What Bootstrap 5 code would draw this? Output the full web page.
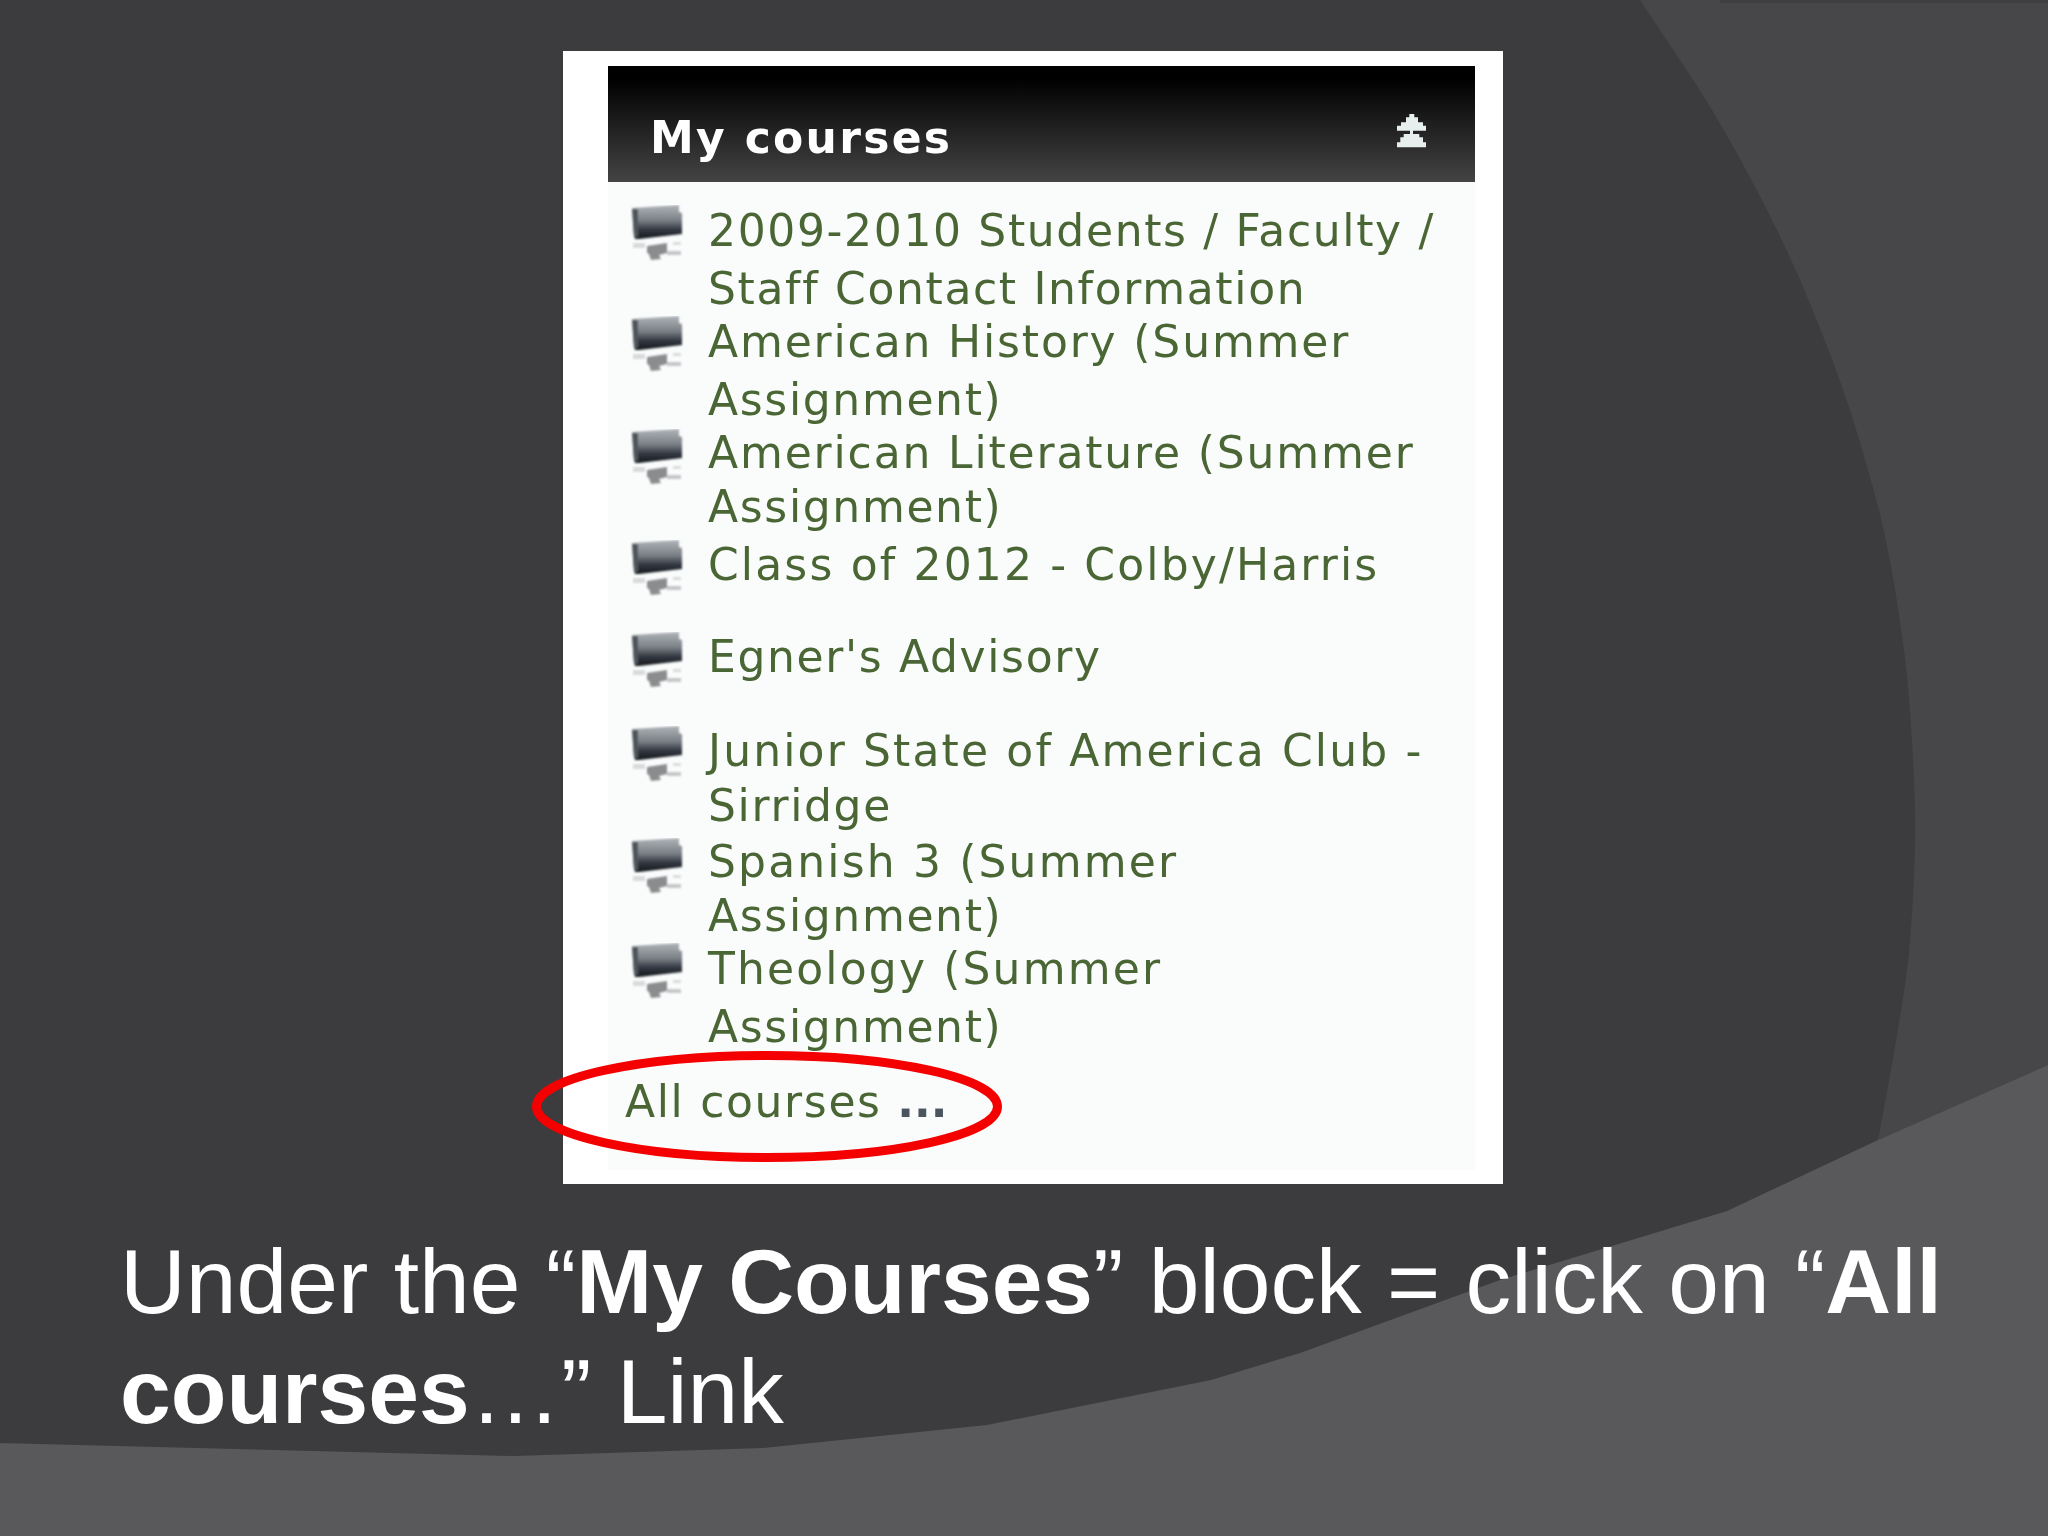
<!DOCTYPE html>
<html lang="en">
<head>
<meta charset="utf-8">
<title>My Courses</title>
<link href="https://cdn.jsdelivr.net/npm/bootstrap@5.3.0/dist/css/bootstrap.min.css" rel="stylesheet">
<style>
html,body{margin:0;background:#3c3b3d}
.slide-stage{width:2048px;height:1536px;overflow:hidden;background:#3c3b3d;font-family:"Liberation Sans",Arial,sans-serif}
.stage-art{left:0;top:0;width:2048px;height:1536px}
.shot-box{width:940px;height:1133px;margin-left:563px;margin-top:51px;padding:15px 28px 14px 45px;background:#fff}
.shot-head{height:116px;padding:0 49px 0 42px;background:linear-gradient(#000 0,#000 10%,#444 100%)}
.shot-title{font-family:"DejaVu Sans",sans-serif;font-weight:700;font-size:44px;letter-spacing:2.3px;color:#fff;line-height:1;margin-top:28px;filter:blur(.5px)}
.shot-arrow{width:29px;height:33.3px;margin-top:14px;filter:blur(.4px)}
.shot-panel{height:988px;background:#fafcfc;padding:20px 0 0 24px;font-family:"DejaVu Sans",sans-serif;font-size:44px;letter-spacing:1.65px;color:#4a6634}
.crs-grid{display:grid;grid-template-rows:111px 113px 110.5px 92px 94px 112.5px 105px 133.5px}
.crs-line{line-height:55px;filter:blur(.5px);white-space:nowrap}
.crs-tall{line-height:58px}
.crs-low{line-height:53.5px}
.crs-icon{width:56px;height:60px;flex:none;margin:3px 23px 0 -3px}
.crs-wide{letter-spacing:2.15px}
.crs-mid{letter-spacing:1.85px}
.crs-all{margin-left:-7px;line-height:55px;filter:blur(.5px)}
.crs-dots{color:#4b5560;font-weight:700;letter-spacing:0}
.call-ring{left:-31px;top:1000px;width:470px;height:111px}
.slide-caption{margin:43px 0 0 120px;width:1880px;font-size:91.2px;line-height:109.5px;color:#fff}
.slide-caption b{font-weight:700}
</style>
</head>
<body>
<div class="slide-stage position-relative">
  <svg class="stage-art position-absolute" viewBox="0 0 2048 1536" aria-hidden="true">
    <path fill="#474648" d="M1640 0L1676 54Q1713 108 1746 170Q1780 232 1806 294Q1832 356 1850 410Q1867 464 1880 514Q1892 564 1900 622Q1909 680 1912 742Q1916 804 1915 850Q1914 895 1910 941Q1907 987 1878 1140L2048 1065V0Z"/>
    <path fill="#3f3e40" d="M1720 0H2048V3H1720Z"/>
    <path fill="#59585a" d="M0 1443L514 1456L763 1448L987 1425L1211 1380L1300 1353L1500 1280L1727 1211L1878 1140L2048 1065V1536H0Z"/>
  </svg>
  <div class="position-relative">
    <div class="shot-box position-relative">
      <div class="shot-head d-flex justify-content-between align-items-center">
        <div class="shot-title">My courses</div>
        <svg class="shot-arrow" viewBox="0 0 29 33.3"><path fill="#e6efed" d="M12.3 0H17.3V3.3H21V8.3H26V11.7H29V16.7H16V20H22.3V23.3H26V28.3H29V33.3H0V28.3H3.3V23.3H6.7V20H13V16.7H0V11.7H4V8.3H9V3.3H12.3Z"/></svg>
      </div>
      <div class="shot-panel">
        <div class="crs-grid">
          <div class="d-flex">
            <svg class="crs-icon"><use href="#pc"/></svg>
            <div class="crs-line crs-tall">2009-2010 Students / Faculty /<br>Staff Contact Information</div>
          </div>
          <div class="d-flex">
            <svg class="crs-icon"><use href="#pc"/></svg>
            <div class="crs-line crs-tall"><span class="crs-mid">American History (Summer</span><br>Assignment)</div>
          </div>
          <div class="d-flex">
            <svg class="crs-icon"><use href="#pc"/></svg>
            <div class="crs-line crs-low"><span class="crs-mid">American Literature (Summer</span><br>Assignment)</div>
          </div>
          <div class="d-flex">
            <svg class="crs-icon"><use href="#pc"/></svg>
            <div class="crs-line crs-wide">Class of 2012 - Colby/Harris</div>
          </div>
          <div class="d-flex">
            <svg class="crs-icon"><use href="#pc"/></svg>
            <div class="crs-line">Egner's Advisory</div>
          </div>
          <div class="d-flex">
            <svg class="crs-icon"><use href="#pc"/></svg>
            <div class="crs-line"><span class="crs-wide">Junior State of America Club -</span><br>Sirridge</div>
          </div>
          <div class="d-flex">
            <svg class="crs-icon"><use href="#pc"/></svg>
            <div class="crs-line crs-low"><span class="crs-wide">Spanish 3 (Summer</span><br>Assignment)</div>
          </div>
          <div class="d-flex">
            <svg class="crs-icon"><use href="#pc"/></svg>
            <div class="crs-line crs-tall"><span class="crs-wide">Theology (Summer</span><br>Assignment)</div>
          </div>
        </div>
        <div class="crs-all">All courses <span class="crs-dots">...</span></div>
      </div>
      <svg class="call-ring position-absolute" viewBox="0 0 470 111"><ellipse cx="235" cy="55.5" rx="230.5" ry="51" fill="none" stroke="#f40000" stroke-width="9"/></svg>
    </div>
    <div class="slide-caption">Under the “<b>My Courses</b>” block = click on “<b>All courses</b>…” Link</div>
  </div>
  <svg width="0" height="0" class="position-absolute">
    <defs>
      <linearGradient id="scr" x1="0" y1="0" x2="0" y2="1"><stop offset="0" stop-color="#b0b4b8"/><stop offset=".45" stop-color="#7a8086"/><stop offset=".72" stop-color="#343a42"/><stop offset="1" stop-color="#14181e"/></linearGradient>
      <filter id="soft" x="-10%" y="-10%" width="120%" height="120%"><feGaussianBlur stdDeviation="1.1"/></filter>
      <g id="pc" filter="url(#soft)">
        <path fill="url(#scr)" d="M3 3L50 0V7L53 8V29L10 34H6L5 30Z"/>
        <path fill="#4e545a" d="M3 4H9V32H5Z"/>
        <path fill="#d8dadc" d="M4 38H16V43H4ZM44 37H52V40H44Z"/>
        <path fill="#8a8c8e" d="M18 41L38 38V48L30 50L32 54L22 55L20 49L18 48Z"/>
        <path fill="#c4c6c8" d="M38 46H52V50H38Z"/>
      </g>
    </defs>
  </svg>
</div>
</body>
</html>
